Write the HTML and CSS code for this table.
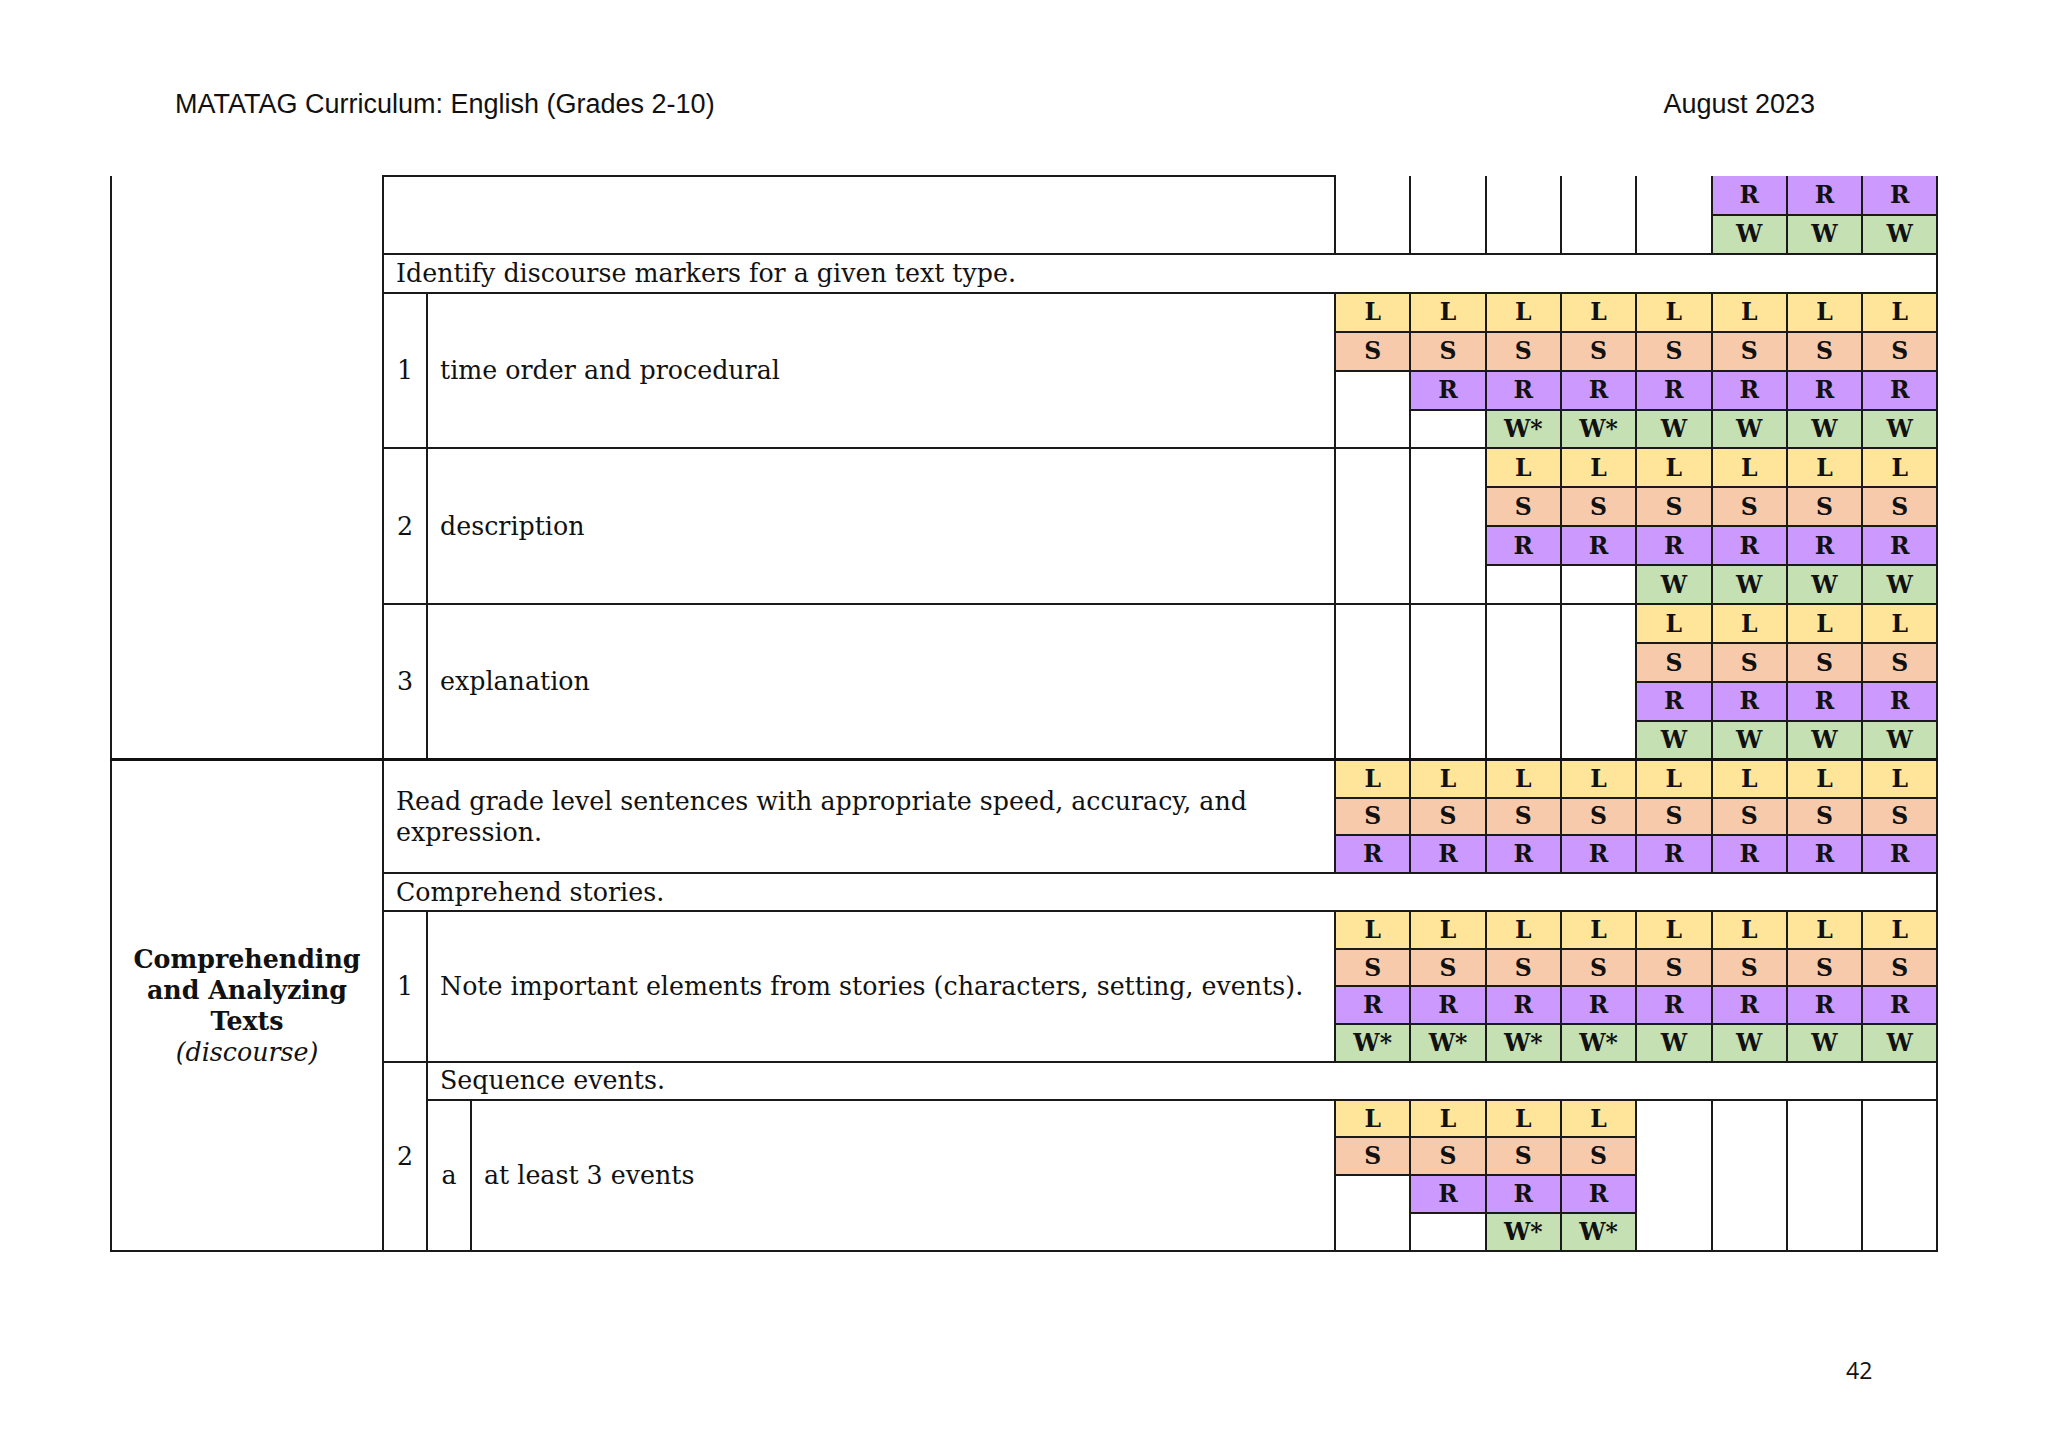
FILE: index.html
```html
<!DOCTYPE html>
<html>
<head>
<meta charset="utf-8">
<link rel="stylesheet" href="styles.css">
</head>
<body>
<div class="page">
  <header class="header">
    <span>MATATAG Curriculum: English (Grades 2-10)</span>
    <span>August 2023</span>
  </header>
  <table class="grid">
    <colgroup>
      <col class="c-cat"><col class="c-num"><col class="c-sub"><col class="c-txt">
      <col class="c-g"><col class="c-g"><col class="c-g"><col class="c-g">
      <col class="c-g"><col class="c-g"><col class="c-g"><col class="c-g">
    </colgroup>
    <tbody class="upper">
      <tr class="cont">
        <td class="cat first" rowspan="15"></td>
        <td class="txt top" colspan="3" rowspan="2"></td>
        <td class="g e" rowspan="2"></td><td class="g e" rowspan="2"></td><td class="g e" rowspan="2"></td><td class="g e" rowspan="2"></td><td class="g e" rowspan="2"></td>
        <td class="g r">R</td><td class="g r">R</td><td class="g r">R</td>
      </tr>
      <tr>
        <td class="g w">W</td><td class="g w">W</td><td class="g w">W</td>
      </tr>
      <tr>
        <td class="txt" colspan="11">Identify discourse markers for a given text type.</td>
      </tr>
      <tr>
        <td class="num" rowspan="4">1</td>
        <td class="txt" colspan="2" rowspan="4">time order and procedural</td>
        <td class="g l">L</td><td class="g l">L</td><td class="g l">L</td><td class="g l">L</td><td class="g l">L</td><td class="g l">L</td><td class="g l">L</td><td class="g l">L</td>
      </tr>
      <tr>
        <td class="g s">S</td><td class="g s">S</td><td class="g s">S</td><td class="g s">S</td><td class="g s">S</td><td class="g s">S</td><td class="g s">S</td><td class="g s">S</td>
      </tr>
      <tr>
        <td class="g e" rowspan="2"></td>
        <td class="g r">R</td><td class="g r">R</td><td class="g r">R</td><td class="g r">R</td><td class="g r">R</td><td class="g r">R</td><td class="g r">R</td>
      </tr>
      <tr>
        <td class="g e"></td>
        <td class="g w">W*</td><td class="g w">W*</td><td class="g w">W</td><td class="g w">W</td><td class="g w">W</td><td class="g w">W</td>
      </tr>
      <tr>
        <td class="num" rowspan="4">2</td>
        <td class="txt" colspan="2" rowspan="4">description</td>
        <td class="g e" rowspan="4"></td><td class="g e" rowspan="4"></td>
        <td class="g l">L</td><td class="g l">L</td><td class="g l">L</td><td class="g l">L</td><td class="g l">L</td><td class="g l">L</td>
      </tr>
      <tr>
        <td class="g s">S</td><td class="g s">S</td><td class="g s">S</td><td class="g s">S</td><td class="g s">S</td><td class="g s">S</td>
      </tr>
      <tr>
        <td class="g r">R</td><td class="g r">R</td><td class="g r">R</td><td class="g r">R</td><td class="g r">R</td><td class="g r">R</td>
      </tr>
      <tr>
        <td class="g e"></td><td class="g e"></td>
        <td class="g w">W</td><td class="g w">W</td><td class="g w">W</td><td class="g w">W</td>
      </tr>
      <tr>
        <td class="num" rowspan="4">3</td>
        <td class="txt" colspan="2" rowspan="4">explanation</td>
        <td class="g e" rowspan="4"></td><td class="g e" rowspan="4"></td><td class="g e" rowspan="4"></td><td class="g e" rowspan="4"></td>
        <td class="g l">L</td><td class="g l">L</td><td class="g l">L</td><td class="g l">L</td>
      </tr>
      <tr>
        <td class="g s">S</td><td class="g s">S</td><td class="g s">S</td><td class="g s">S</td>
      </tr>
      <tr>
        <td class="g r">R</td><td class="g r">R</td><td class="g r">R</td><td class="g r">R</td>
      </tr>
      <tr>
        <td class="g w">W</td><td class="g w">W</td><td class="g w">W</td><td class="g w">W</td>
      </tr>
    </tbody>
    <tbody class="lower">
      <tr class="sep">
        <td class="cat" rowspan="13">
          <strong>Comprehending<br>and Analyzing<br>Texts</strong><br><em>(discourse)</em>
        </td>
        <td class="txt wrap" colspan="3" rowspan="3">Read grade level sentences with appropriate speed, accuracy, and expression.</td>
        <td class="g l">L</td><td class="g l">L</td><td class="g l">L</td><td class="g l">L</td><td class="g l">L</td><td class="g l">L</td><td class="g l">L</td><td class="g l">L</td>
      </tr>
      <tr>
        <td class="g s">S</td><td class="g s">S</td><td class="g s">S</td><td class="g s">S</td><td class="g s">S</td><td class="g s">S</td><td class="g s">S</td><td class="g s">S</td>
      </tr>
      <tr>
        <td class="g r">R</td><td class="g r">R</td><td class="g r">R</td><td class="g r">R</td><td class="g r">R</td><td class="g r">R</td><td class="g r">R</td><td class="g r">R</td>
      </tr>
      <tr>
        <td class="txt" colspan="11">Comprehend stories.</td>
      </tr>
      <tr>
        <td class="num" rowspan="4">1</td>
        <td class="txt" colspan="2" rowspan="4">Note important elements from stories (characters, setting, events).</td>
        <td class="g l">L</td><td class="g l">L</td><td class="g l">L</td><td class="g l">L</td><td class="g l">L</td><td class="g l">L</td><td class="g l">L</td><td class="g l">L</td>
      </tr>
      <tr>
        <td class="g s">S</td><td class="g s">S</td><td class="g s">S</td><td class="g s">S</td><td class="g s">S</td><td class="g s">S</td><td class="g s">S</td><td class="g s">S</td>
      </tr>
      <tr>
        <td class="g r">R</td><td class="g r">R</td><td class="g r">R</td><td class="g r">R</td><td class="g r">R</td><td class="g r">R</td><td class="g r">R</td><td class="g r">R</td>
      </tr>
      <tr>
        <td class="g w">W*</td><td class="g w">W*</td><td class="g w">W*</td><td class="g w">W*</td><td class="g w">W</td><td class="g w">W</td><td class="g w">W</td><td class="g w">W</td>
      </tr>
      <tr>
        <td class="num" rowspan="5">2</td>
        <td class="txt" colspan="10">Sequence events.</td>
      </tr>
      <tr>
        <td class="num" rowspan="4">a</td>
        <td class="txt" rowspan="4">at least 3 events</td>
        <td class="g l">L</td><td class="g l">L</td><td class="g l">L</td><td class="g l">L</td>
        <td class="g e" rowspan="4"></td><td class="g e" rowspan="4"></td><td class="g e" rowspan="4"></td><td class="g e" rowspan="4"></td>
      </tr>
      <tr>
        <td class="g s">S</td><td class="g s">S</td><td class="g s">S</td><td class="g s">S</td>
      </tr>
      <tr>
        <td class="g e" rowspan="2"></td>
        <td class="g r">R</td><td class="g r">R</td><td class="g r">R</td>
      </tr>
      <tr>
        <td class="g e"></td>
        <td class="g w">W*</td><td class="g w">W*</td>
      </tr>
    </tbody>
  </table>
  <footer class="footer">42</footer>
</div>
</body>
</html>
```

FILE: styles.css
```css
html, body {
  margin: 0;
  padding: 0;
  background: #ffffff;
}

.page {
  width: 2048px;
  height: 1449px;
  position: relative;
  box-sizing: border-box;
  padding-top: 88px;
  color: #111111;
}

.header {
  display: flex;
  justify-content: space-between;
  margin-left: 175px;
  width: 1640px;
  font-family: "Liberation Sans", Arial, sans-serif;
  font-size: 27px;
  line-height: 32px;
  color: #111;
}

.grid {
  margin-top: 55px;
  margin-left: 110px;
  width: 1827px;
  table-layout: fixed;
  border-collapse: collapse;
  border-left: 2px solid #111;
  border-right: 2px solid #111;
  border-bottom: 2px solid #111;
  font-family: "DejaVu Serif", "Liberation Serif", serif;
  font-size: 25.3px;
  color: #111;
}

.c-cat { width: 272px; }
.c-num { width: 44px; }
.c-sub { width: 44px; }
.c-txt { width: 864px; }
.c-g { width: 75.3px; }

.upper tr {
  height: 38.93px;
}

.lower tr {
  height: 37.77px;
}

.grid td {
  border: 2px solid #1a1a1a;
  padding: 0;
  vertical-align: middle;
}

.cont td {
  border-top: none;
}

.cont td.top {
  border-top: 2px solid #1a1a1a;
}

.cat {
  text-align: center;
  line-height: 31px;
  padding: 0 6px !important;
}

.cat strong {
  font-weight: bold;
}

.cat em {
  font-style: italic;
}

.txt {
  padding: 0 12px !important;
  line-height: 31px;
  white-space: nowrap;
}

.txt.wrap {
  white-space: normal;
}

.num {
  text-align: center;
  border-right-width: 1px !important;
}

.g {
  text-align: center;
  font-weight: bold;
  font-size: 23.5px;
  line-height: 26px;
}

.g.l { background: #ffe599; }
.g.s { background: #f7caac; }
.g.r { background: #cc99ff; }
.g.w { background: #c5e0b3; }
.g.e { background: #ffffff; }

.sep td {
  border-top: 3px solid #111 !important;
}

.footer {
  position: absolute;
  left: 1846px;
  top: 1354px;
  font-family: "Open Sans", "Liberation Sans", sans-serif;
  font-size: 23px;
  line-height: 32px;
  color: #111;
}
```
